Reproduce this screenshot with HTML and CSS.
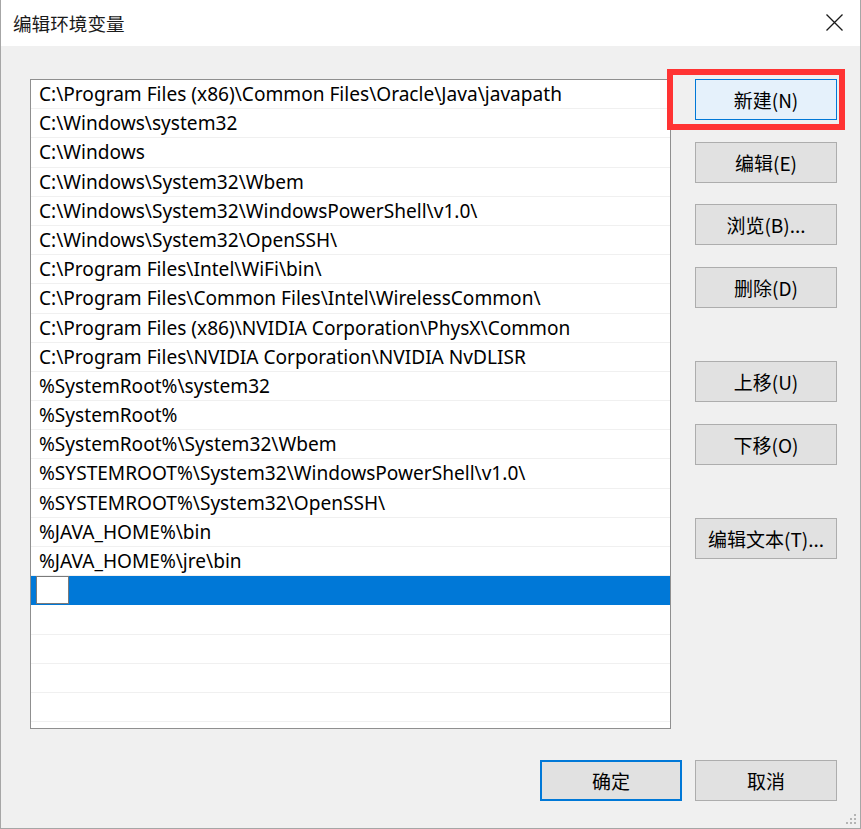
FILE: index.html
```html
<!DOCTYPE html>
<html lang="zh-CN">
<head>
    <meta charset="UTF-8">
    <title>编辑环境变量</title>
    <link rel="stylesheet" href="styles.css">
</head>
<body>

<div class="window">
    <div class="titlebar">
        <span class="title">编辑环境变量</span>
        <svg class="close" width="17" height="17" viewBox="0 0 17 17">
            <path d="M0.5 0.5 L16.5 16.5 M16.5 0.5 L0.5 16.5" stroke="#1a1a1a" stroke-width="1.3" fill="none"/>
        </svg>
    </div>

    <div class="content">
        <div class="main">
            <div class="list">
                <div class="row">C:\Program Files (x86)\Common Files\Oracle\Java\javapath</div>
                <div class="row">C:\Windows\system32</div>
                <div class="row">C:\Windows</div>
                <div class="row">C:\Windows\System32\Wbem</div>
                <div class="row">C:\Windows\System32\WindowsPowerShell\v1.0\</div>
                <div class="row">C:\Windows\System32\OpenSSH\</div>
                <div class="row">C:\Program Files\Intel\WiFi\bin\</div>
                <div class="row">C:\Program Files\Common Files\Intel\WirelessCommon\</div>
                <div class="row">C:\Program Files (x86)\NVIDIA Corporation\PhysX\Common</div>
                <div class="row">C:\Program Files\NVIDIA Corporation\NVIDIA NvDLISR</div>
                <div class="row">%SystemRoot%\system32</div>
                <div class="row">%SystemRoot%</div>
                <div class="row">%SystemRoot%\System32\Wbem</div>
                <div class="row">%SYSTEMROOT%\System32\WindowsPowerShell\v1.0\</div>
                <div class="row">%SYSTEMROOT%\System32\OpenSSH\</div>
                <div class="row">%JAVA_HOME%\bin</div>
                <div class="row">%JAVA_HOME%\jre\bin</div>
                <div class="row selected"><input class="edit" type="text"></div>
                <div class="row"></div>
                <div class="row"></div>
                <div class="row"></div>
                <div class="row"></div>
                <div class="row"></div>
            </div>

            <div class="side">
                <div class="highlight">
                    <button class="btn focused">新建(N)</button>
                </div>
                <button class="btn">编辑(E)</button>
                <button class="btn">浏览(B)...</button>
                <button class="btn">删除(D)</button>
                <button class="btn group">上移(U)</button>
                <button class="btn">下移(O)</button>
                <button class="btn group">编辑文本(T)...</button>
            </div>
        </div>

        <div class="footer">
            <button class="btn default">确定</button>
            <button class="btn">取消</button>
        </div>

        <svg class="grip" width="12" height="12" viewBox="0 0 12 12">
            <rect x="9" y="0" width="2" height="2" fill="#b4b4b4"/>
            <rect x="5" y="4" width="2" height="2" fill="#b4b4b4"/>
            <rect x="9" y="4" width="2" height="2" fill="#b4b4b4"/>
            <rect x="1" y="8" width="2" height="2" fill="#b4b4b4"/>
            <rect x="5" y="8" width="2" height="2" fill="#b4b4b4"/>
            <rect x="9" y="8" width="2" height="2" fill="#b4b4b4"/>
        </svg>
    </div>
</div>

</body>
</html>
```

FILE: styles.css
```css
body {
    margin: 0;
    font-family: "Noto Sans", "Noto Sans CJK SC", sans-serif;
    background: #ffffff;
}
.window {
    width: 861px;
    height: 829px;
    box-sizing: border-box;
    border: 1px solid #a6a6a6;
    border-top: none;
    display: flex;
    flex-direction: column;
    overflow: hidden;
}
.titlebar {
    height: 46px;
    flex-shrink: 0;
    background: #ffffff;
    display: flex;
    align-items: center;
    justify-content: space-between;
    padding: 0 17px 0 12px;
}
.title {
    font-family: "Noto Sans CJK SC", sans-serif;
    font-size: 18.6px;
    color: #1a1a1a;
    margin-top: -2px;
}
.close {
    margin-top: -2px;
}
.content {
    flex: 1;
    background: #f0f0f0;
    padding: 33px 0 0 29px;
    position: relative;
}
.main {
    display: flex;
}
.list {
    width: 641px;
    height: 650px;
    box-sizing: border-box;
    border: 1px solid #8f8f8f;
    background: #ffffff;
    overflow: hidden;
}
.row {
    height: 29.2px;
    box-sizing: border-box;
    border-bottom: 1px solid #f0f0f0;
    padding-left: 8px;
    font-size: 19.1px;
    line-height: 28px;
    color: #000000;
    white-space: nowrap;
}
.row.selected {
    background: #0078d7;
    border-bottom-color: #0078d7;
    padding-left: 5px;
}
.edit {
    display: block;
    width: 33px;
    height: 28px;
    box-sizing: border-box;
    margin: 0;
    border: 1px solid #7a7a7a;
    background: #ffffff;
    padding: 0;
}
.side {
    display: flex;
    flex-direction: column;
    gap: 21.5px;
    margin-left: 24px;
}
.btn {
    width: 142px;
    height: 41px;
    box-sizing: border-box;
    background: #e1e1e1;
    border: 1px solid #adadad;
    font-family: "Noto Sans CJK SC", sans-serif;
    font-size: 19px;
    color: #000000;
    padding: 0;
}
.btn.focused {
    background: #e5f1fb;
    border: 1px solid #0078d7;
    display: block;
}
.btn.default {
    border: 2px solid #0078d7;
}
.btn.group {
    margin-top: 32px;
}
.highlight {
    position: relative;
}
.highlight::before {
    content: "";
    position: absolute;
    top: -10px;
    left: -28px;
    right: -8px;
    bottom: -10px;
    border: 6px solid #ff3333;
}
.footer {
    display: flex;
    justify-content: flex-end;
    gap: 13px;
    margin-top: 31px;
    padding-right: 23px;
}
.grip {
    position: absolute;
    right: 3px;
    bottom: 2px;
}
```
